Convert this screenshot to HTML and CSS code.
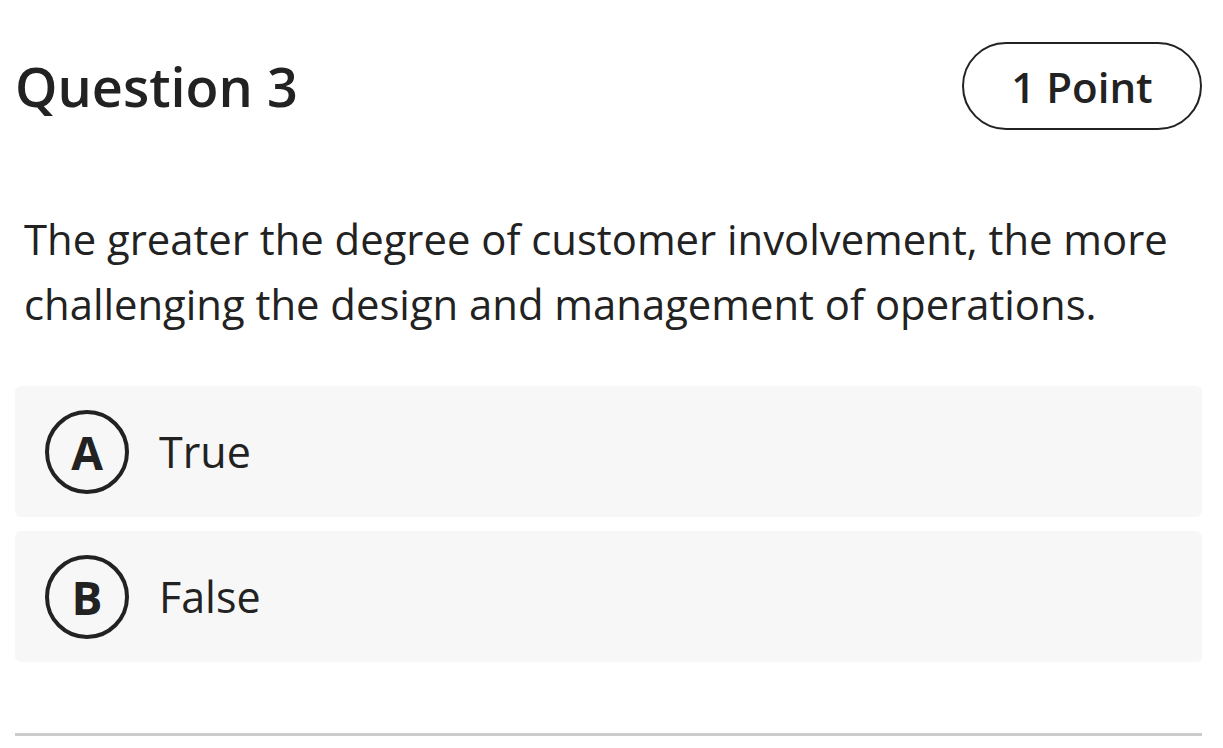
FILE: index.html
```html
<!DOCTYPE html>
<html>
<head>
<meta charset="utf-8">
<link rel="stylesheet" href="styles.css">
</head>
<body>
<div class="page">
  <div class="header">
    <h1 class="title">Question 3</h1>
    <div class="points">1 Point</div>
  </div>
  <p class="prompt">The greater the degree of customer involvement, the more challenging the design and management of operations.</p>
  <div class="options">
    <div class="option">
      <span class="letter">A</span>
      <span class="label">True</span>
    </div>
    <div class="option">
      <span class="letter">B</span>
      <span class="label">False</span>
    </div>
  </div>
  <div class="divider"></div>
</div>
</body>
</html>
```
FILE: styles.css
```css
html, body {
  margin: 0;
  padding: 0;
  background: #ffffff;
}
body {
  font-family: "Open Sans", "Noto Sans", sans-serif;
  color: #222222;
}
.page {
  padding: 42px 21px 0 15px;
}
.header {
  display: flex;
  justify-content: space-between;
  align-items: center;
}
.title {
  margin: 0;
  font-size: 54px;
  font-weight: 600;
  line-height: 1;
  letter-spacing: 0;
}
.points {
  box-sizing: border-box;
  width: 240px;
  height: 88px;
  border: 2px solid #222;
  border-radius: 44px;
  display: flex;
  align-items: center;
  justify-content: center;
  font-size: 42px;
  font-weight: 600;
}
.prompt {
  margin: 76px 0 50px 9px;
  font-size: 41.8px;
  line-height: 65px;
  font-weight: 400;
}
.options {
  display: flex;
  flex-direction: column;
  gap: 14px;
}
.option {
  height: 131px;
  background: #f7f7f7;
  border-radius: 6px;
  display: flex;
  align-items: center;
  padding-left: 30px;
}
.letter {
  box-sizing: border-box;
  width: 84px;
  height: 84px;
  border: 4px solid #222;
  border-radius: 50%;
  display: flex;
  align-items: center;
  justify-content: center;
  font-size: 46px;
  font-weight: 700;
  line-height: 1;
  flex-shrink: 0;
}
.label {
  margin-left: 30px;
  font-size: 43px;
  font-weight: 500;
}
.divider {
  margin-top: 71px;
  height: 3px;
  background: #cccccc;
}
```
